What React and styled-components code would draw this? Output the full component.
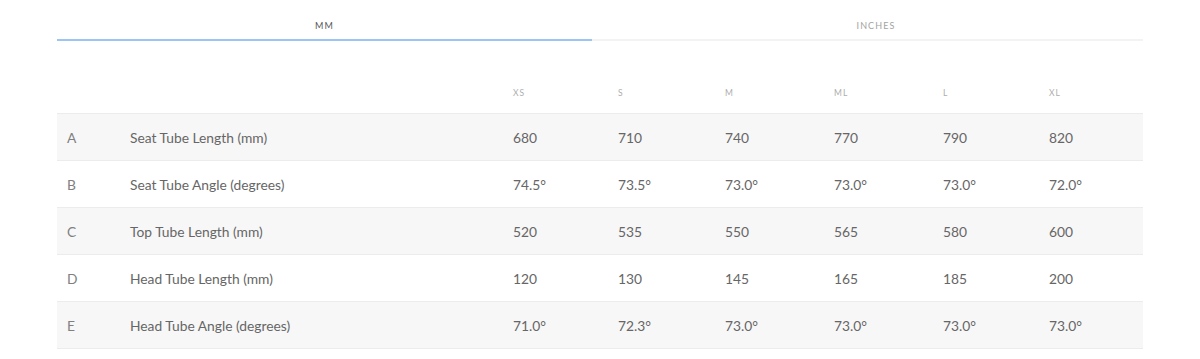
import React from "react";
import styled, { createGlobalStyle } from "styled-components";

const Global = createGlobalStyle`
  html, body { margin: 0; padding: 0; background: #fff; }
  body { font-family: Lato, "Liberation Sans", sans-serif; -webkit-font-smoothing: antialiased; }
`;

const Page = styled.div`
  padding: 0 57px;
  width: 1200px;
  box-sizing: border-box;
`;

const Tabs = styled.div`
  display: grid;
  grid-template-columns: 535px 1fr;
`;

const Tab = styled.button`
  all: unset;
  box-sizing: border-box;
  height: 41px;
  display: flex;
  align-items: center;
  justify-content: center;
  padding-top: 12px;
  padding-left: ${(p) => (p.$active ? "0" : "17px")};
  font-family: Lato, "Liberation Sans", sans-serif;
  font-size: 9px;
  letter-spacing: 1.1px;
  text-transform: uppercase;
  color: ${(p) => (p.$active ? "#555" : "#a3a3a3")};
  border-bottom: 2px solid ${(p) => (p.$active ? "#9ec4f3" : "#f3f3f3")};
`;

const COLS = "73px 383px 105px 107px 109px 109px 106px 1fr";

const HeaderRow = styled.div`
  display: grid;
  grid-template-columns: ${COLS};
  height: 73px;
  align-items: end;
  padding-bottom: 15px;
  box-sizing: border-box;
  border-bottom: 1px solid #ececec;
`;

const HeadCell = styled.div`
  font-size: 8.5px;
  letter-spacing: 1px;
  color: #adadad;
  line-height: 10px;
`;

const Row = styled.div`
  display: grid;
  grid-template-columns: ${COLS};
  height: 47px;
  align-items: center;
  box-sizing: border-box;
  border-bottom: 1px solid #ececec;
  background: ${(p) => (p.$shade ? "#f7f7f7" : "#fff")};
`;

const Letter = styled.div`
  padding-left: 10px;
  font-size: 13.8px;
  color: #808080;
`;

const Cell = styled.div`
  font-size: 13.8px;
  color: #666;
`;

const sizes = ["XS", "S", "M", "ML", "L", "XL"];
const rows = [
  ["A", "Seat Tube Length (mm)", ["680", "710", "740", "770", "790", "820"]],
  ["B", "Seat Tube Angle (degrees)", ["74.5°", "73.5°", "73.0°", "73.0°", "73.0°", "72.0°"]],
  ["C", "Top Tube Length (mm)", ["520", "535", "550", "565", "580", "600"]],
  ["D", "Head Tube Length (mm)", ["120", "130", "145", "165", "185", "200"]],
  ["E", "Head Tube Angle (degrees)", ["71.0°", "72.3°", "73.0°", "73.0°", "73.0°", "73.0°"]],
];

export default function App() {
  return (
    <Page>
      <Global />
      <Tabs>
        <Tab $active>MM</Tab>
        <Tab>Inches</Tab>
      </Tabs>
      <HeaderRow>
        <HeadCell />
        <HeadCell />
        {sizes.map((s) => (
          <HeadCell key={s}>{s}</HeadCell>
        ))}
      </HeaderRow>
      {rows.map(([l, name, vals], i) => (
        <Row key={l} $shade={i % 2 === 0}>
          <Letter>{l}</Letter>
          <Cell>{name}</Cell>
          {vals.map((v, j) => (
            <Cell key={j}>{v}</Cell>
          ))}
        </Row>
      ))}
    </Page>
  );
}
